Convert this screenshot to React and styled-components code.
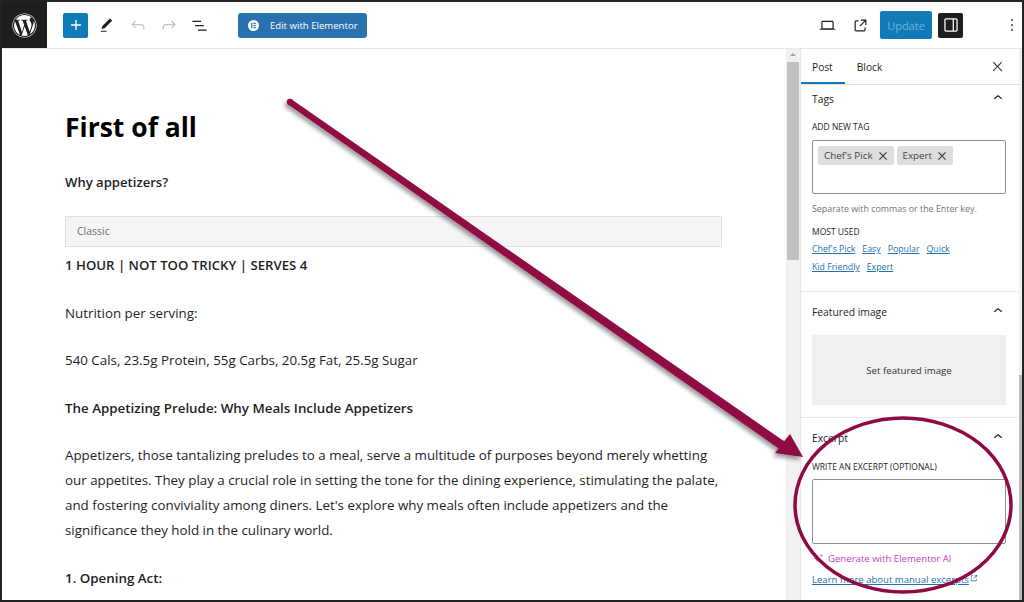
import React from 'react';
import styled, { createGlobalStyle } from 'styled-components';
import { FaWordpress } from 'react-icons/fa';

const GlobalStyle = createGlobalStyle`
  html, body {
    margin: 0;
    padding: 0;
    background: #fff;
  }
  * {
    box-sizing: border-box;
  }
`;

const Icon = ({ d, size = 20, color = '#1e1e1e' }) => (
  <svg width={size} height={size} viewBox="0 0 24 24" fill={color}>
    <path d={d} />
  </svg>
);

const icons = {
  plus: 'M18 11.2h-5.2V6h-1.6v5.2H6v1.6h5.2V18h1.6v-5.2H18z',
  pencil: 'M20.1 5.1L16.9 2 6.2 12.7l-1.3 4.4 4.5-1.3L20.1 5.1zM4 20.8h8v-1.5H4v1.5z',
  undo: 'M18.3 11.7c-.6-.6-1.4-.9-2.3-.9H6.7l2.9-3.3-1.1-1-4.5 5L8.5 16l1-1-2.7-2.7H16c.5 0 .9.2 1.3.5 1 1 1 3.4 1 4.5v.3h1.5v-.2c0-1.5 0-4.3-1.5-5.7z',
  redo: 'M15.6 6.5l-1.1 1 2.9 3.3H8c-.9 0-1.7.3-2.3.9-1.4 1.5-1.4 4.2-1.4 5.6v.2h1.5v-.3c0-1.1 0-3.5 1-4.5.3-.3.7-.5 1.3-.5h9.2L14.5 15l1.1 1.1 4.6-4.6-4.6-5z',
  list: 'M3 6h11v1.5H3V6zm3.5 5.5h11V13h-11v-1.5zM21 17H10v1.5h11V17z',
  desktop: 'M20.5 16h-.7V8c0-1.1-.9-2-2-2H6.2c-1.1 0-2 .9-2 2v8h-.7c-.8 0-1.5.7-1.5 1.5h20c0-.8-.7-1.5-1.5-1.5zM5.7 8c0-.3.2-.5.5-.5h11.6c.3 0 .5.2.5.5v7.6H5.7V8z',
  external: 'M19.5 4.5h-7V6h4.44l-5.97 5.97 1.06 1.06L18 7.06v4.44h1.5v-7Zm-13 1a2 2 0 0 0-2 2v10a2 2 0 0 0 2 2h10a2 2 0 0 0 2-2v-3H17v3a.5.5 0 0 1-.5.5h-10a.5.5 0 0 1-.5-.5v-10a.5.5 0 0 1 .5-.5h3V5.5h-3Z',
  drawer: 'M18 4H6c-1.1 0-2 .9-2 2v12c0 1.1.9 2 2 2h12c1.1 0 2-.9 2-2V6c0-1.1-.9-2-2-2zm-4 14.5H6c-.3 0-.5-.2-.5-.5V6c0-.3.2-.5.5-.5h8v13zm4.5-.5c0 .3-.2.5-.5.5h-2.5v-13H18c.3 0 .5.2.5.5v12z',
  more: 'M13 19h-2v-2h2v2zm0-6h-2v-2h2v2zm0-6h-2V5h2v2z',
  close: 'M13 11.8l6.1-6.3-1-1-6.1 6.2-6.1-6.2-1 1 6.1 6.3-6.5 6.7 1 1 6.5-6.6 6.5 6.6 1-1z',
  chevron: 'M6.5 12.4L12 8l5.5 4.4-.9 1.2L12 10l-4.5 3.6-1-1.2z',
};

function App() {
  return (
    <Frame>
      <GlobalStyle />
      <TopBar>
        <Logo>
          <FaWordpress size={25} color="#fff" />
        </Logo>
        <LeftTools>
          <AddButton>
            <Icon d={icons.plus} color="#fff" size={20} />
          </AddButton>
          <ToolIcon $w={31}>
            <Icon d={icons.pencil} size={17} />
          </ToolIcon>
          <ToolIcon $w={31}>
            <Icon d={icons.undo} color="#c4c4c4" />
          </ToolIcon>
          <ToolIcon $w={31}>
            <Icon d={icons.redo} color="#c4c4c4" />
          </ToolIcon>
          <ToolIcon $w={31}>
            <Icon d={icons.list} size={19} />
          </ToolIcon>
          <ElementorButton>
            <svg width="11" height="11" viewBox="0 0 14 14">
              <circle cx="7" cy="7" r="7" fill="#fff" />
              <rect x="4.2" y="3.6" width="1.4" height="6.8" fill="#2271b1" />
              <rect x="6.8" y="3.6" width="3.2" height="1.4" fill="#2271b1" />
              <rect x="6.8" y="6.3" width="3.2" height="1.4" fill="#2271b1" />
              <rect x="6.8" y="9" width="3.2" height="1.4" fill="#2271b1" />
            </svg>
            Edit with Elementor
          </ElementorButton>
        </LeftTools>
        <RightTools>
          <ToolIcon $w={33}>
            <Icon d={icons.desktop} size={19} />
          </ToolIcon>
          <ToolIcon $w={33}>
            <Icon d={icons.external} size={19} />
          </ToolIcon>
          <UpdateButton>Update</UpdateButton>
          <DrawerButton>
            <Icon d={icons.drawer} color="#fff" />
          </DrawerButton>
          <MoreButton>
            <Icon d={icons.more} />
          </MoreButton>
        </RightTools>
      </TopBar>

      <Body>
        <Canvas>
          <Title>First of all</Title>
          <Lead>Why appetizers?</Lead>
          <ClassicBlock>Classic</ClassicBlock>
          <MetaLine>1 HOUR | NOT TOO TRICKY | SERVES 4</MetaLine>
          <Para>Nutrition per serving:</Para>
          <Para>540 Cals, 23.5g Protein, 55g Carbs, 20.5g Fat, 25.5g Sugar</Para>
          <SubHead>The Appetizing Prelude: Why Meals Include Appetizers</SubHead>
          <Para>
            Appetizers, those tantalizing preludes to a meal, serve a multitude of purposes beyond merely whetting
            our appetites. They play a crucial role in setting the tone for the dining experience, stimulating the palate,
            and fostering conviviality among diners. Let's explore why meals often include appetizers and the
            significance they hold in the culinary world.
          </Para>
          <SubHead>1. Opening Act:</SubHead>
        </Canvas>

        <ScrollTrack>
          <ScrollArrow />
          <ScrollThumb />
        </ScrollTrack>

        <Sidebar>
          <Tabs>
            <Tab $active>Post</Tab>
            <Tab>Block</Tab>
            <TabClose>
              <Icon d={icons.close} size={15} />
            </TabClose>
          </Tabs>

          <Panel $h={207}>
            <PanelHead $scrolled>
              Tags
              <Icon d={icons.chevron} size={18} />
            </PanelHead>
            <TagsLabel>ADD NEW TAG</TagsLabel>
            <TagBox>
              <Tag>
                Chef's Pick
                <Icon d={icons.close} size={12} color="#333" />
              </Tag>
              <Tag>
                Expert
                <Icon d={icons.close} size={12} color="#333" />
              </Tag>
            </TagBox>
            <Hint>Separate with commas or the Enter key.</Hint>
            <SmallLabel>MOST USED</SmallLabel>
            <TagLinks>
              <TagLink>Chef's Pick</TagLink>
              <TagLink>Easy</TagLink>
              <TagLink>Popular</TagLink>
              <TagLink>Quick</TagLink>
            </TagLinks>
            <TagLinks>
              <TagLink>Kid Friendly</TagLink>
              <TagLink>Expert</TagLink>
            </TagLinks>
          </Panel>

          <Panel $h={126}>
            <PanelHead>
              Featured image
              <Icon d={icons.chevron} size={18} />
            </PanelHead>
            <ImageSlot>Set featured image</ImageSlot>
          </Panel>

          <Panel $last>
            <PanelHead>
              Excerpt
              <Icon d={icons.chevron} size={18} />
            </PanelHead>
            <ExcerptLabel>WRITE AN EXCERPT (OPTIONAL)</ExcerptLabel>
            <ExcerptBox />
            <AiLink>
              <svg width="12" height="12" viewBox="0 0 12 12" fill="#c83dbf">
                <path d="M5 2l.9 2.6L8.5 5.5l-2.6.9L5 9l-.9-2.6L1.5 5.5l2.6-.9zM9.5 1l.4 1.1 1.1.4-1.1.4-.4 1.1-.4-1.1L8 2.5l1.1-.4z" />
              </svg>
              Generate with Elementor AI
            </AiLink>
            <LearnLink>
              Learn more about manual excerpts
              <svg width="10" height="10" viewBox="0 0 24 24" fill="#2271b1">
                <path d={icons.external} />
              </svg>
            </LearnLink>
          </Panel>
        </Sidebar>
        <SideScroll>
          <SideThumb />
        </SideScroll>
      </Body>

      <Callout viewBox="0 0 1024 602">
        <defs>
          <filter id="soft" x="-10%" y="-10%" width="120%" height="120%">
            <feDropShadow dx="-2" dy="3" stdDeviation="2" floodColor="#000" floodOpacity="0.4" />
          </filter>
        </defs>
        <g filter="url(#soft)" fill="#8f0a42">
          <circle cx="290" cy="102" r="3.2" />
          <path d="M288.2 104.6L780.4 449.7L785.6 442.3L291.8 99.4Z" />
          <path d="M803 457L775 453L790 434Z" />
        </g>
        <ellipse cx="903" cy="505" rx="108" ry="87" fill="none" stroke="#8f0a42" strokeWidth="3.5" />
      </Callout>
    </Frame>
  );
}

const Frame = styled.div`
  position: relative;
  width: 1024px;
  height: 602px;
  display: flex;
  flex-direction: column;
  overflow: hidden;
  background: #fff;
  border: 2px solid #222;
  font-family: "Open Sans", "Noto Sans", sans-serif;
  color: #1e1e1e;
`;

const TopBar = styled.header`
  flex: none;
  height: 47px;
  display: flex;
  align-items: center;
  border-bottom: 1px solid #e8e8e8;
`;

const Logo = styled.div`
  width: 45px;
  height: 46px;
  background: #1e1e1e;
  display: flex;
  align-items: center;
  justify-content: center;
`;

const LeftTools = styled.div`
  display: flex;
  align-items: center;
  margin-left: 16px;
`;

const RightTools = styled.div`
  display: flex;
  align-items: center;
  margin-left: auto;
`;

const ToolIcon = styled.div`
  width: ${props => props.$w}px;
  height: 24px;
  display: flex;
  align-items: center;
  justify-content: center;
`;

const AddButton = styled.div`
  width: 25px;
  height: 25px;
  margin-right: 3px;
  background: #0f7cb8;
  border-radius: 2px;
  display: flex;
  align-items: center;
  justify-content: center;
`;

const ElementorButton = styled.div`
  width: 129px;
  height: 25px;
  margin-left: 23px;
  background: #2a72af;
  border-radius: 3px;
  color: #fff;
  font-size: 9.6px;
  white-space: nowrap;
  display: flex;
  align-items: center;
  gap: 11px;
  padding-left: 10px;
`;

const UpdateButton = styled.div`
  width: 52px;
  height: 28px;
  margin-left: 3px;
  background: #0f7cb8;
  border-radius: 2px;
  color: #72b0d6;
  font-size: 11px;
  display: flex;
  align-items: center;
  justify-content: center;
`;

const DrawerButton = styled.div`
  width: 25px;
  height: 25px;
  margin-left: 6px;
  background: #1e1e1e;
  border-radius: 2px;
  display: flex;
  align-items: center;
  justify-content: center;
`;

const MoreButton = styled.div`
  width: 20px;
  height: 20px;
  margin-left: 39px;
`;

const Body = styled.div`
  flex: 1;
  min-height: 0;
  display: flex;
`;

const Canvas = styled.main`
  width: 784px;
  flex: none;
  padding: 61px 64px 0 63px;
  overflow: hidden;
  font-size: 13.35px;
  line-height: 25px;
  color: #1e1e1e;
`;

const Title = styled.h1`
  margin: 0;
  font-size: 26.5px;
  line-height: 34px;
  font-weight: 700;
  color: #000;
`;

const Lead = styled.p`
  margin: 26px 0 0;
  font-size: 13.1px;
  font-weight: 600;
`;

const ClassicBlock = styled.div`
  height: 31px;
  margin-top: 21px;
  background: #f5f5f5;
  border: 1px solid #e0e0e0;
  padding-left: 11px;
  display: flex;
  align-items: center;
  font-size: 10.5px;
  color: #6d6d6d;
`;

const MetaLine = styled.p`
  margin: 6px 0 0;
  font-size: 13.2px;
  font-weight: 600;
`;

const Para = styled.p`
  margin: 22.5px 0 0;
`;

const SubHead = styled.p`
  margin: 22.5px 0 0;
  font-size: 13.35px;
  font-weight: 600;
`;

const ScrollTrack = styled.div`
  width: 14px;
  flex: none;
  background: #f1f1f1;
  padding-top: 4px;
`;

const ScrollArrow = styled.div`
  width: 0;
  height: 0;
  margin: 0 auto 6px;
  border-left: 3px solid transparent;
  border-right: 3px solid transparent;
  border-bottom: 3px solid #a3a3a3;
`;

const ScrollThumb = styled.div`
  height: 198px;
  background: #c1c1c1;
  margin: 0 1px;
`;

const Sidebar = styled.aside`
  width: 219px;
  flex: none;
  border-left: 1px solid #e8e8e8;
  overflow: hidden;
`;

const Tabs = styled.div`
  height: 36px;
  display: flex;
  align-items: center;
  border-bottom: 1px solid #e0e0e0;
  font-size: 10.2px;
`;

const Tab = styled.div`
  height: 100%;
  padding: 0 12px 0 11px;
  display: flex;
  align-items: center;
  color: #1e1e1e;
  box-shadow: ${props => (props.$active ? 'inset 0 -2px 0 #0f7cb8' : 'none')};
  margin-right: ${props => (props.$active ? '1px' : '0')};
`;

const TabClose = styled.div`
  margin-left: auto;
  margin-right: 14px;
  height: 15px;
`;

const Panel = styled.section`
  ${props => (props.$h ? `height: ${props.$h}px;` : '')}
  padding: 0 13px 0 11px;
  border-bottom: ${props => (props.$last ? 'none' : '1px solid #e8e8e8')};
`;

const PanelHead = styled.div`
  height: ${props => (props.$scrolled ? '28px' : '40px')};
  display: flex;
  align-items: center;
  justify-content: space-between;
  font-size: 10.3px;
  font-weight: 500;

  svg {
    margin-right: -1px;
    margin-top: -3px;
  }
`;

const SmallLabel = styled.div`
  font-size: 8.5px;
  line-height: 12px;
  font-weight: 500;
  color: #1e1e1e;
`;

const TagsLabel = styled(SmallLabel)`
  margin-top: 8px;
`;

const ExcerptLabel = styled(SmallLabel)`
  margin-top: 3px;
`;

const TagBox = styled.div`
  height: 54px;
  margin-top: 7px;
  border: 1px solid #8c8f94;
  border-radius: 2px;
  padding: 5px;
  display: flex;
  align-items: flex-start;
  gap: 3px;
`;

const Tag = styled.div`
  height: 19px;
  padding: 0 5px 0 6px;
  background: #ddd;
  border-radius: 2px;
  display: flex;
  align-items: center;
  gap: 4px;
  font-size: 9.8px;
  color: #444;

  svg {
    stroke: #333;
    stroke-width: 0.8;
  }
`;

const Hint = styled.div`
  margin: 9px 0 11px;
  font-size: 8.9px;
  line-height: 12px;
  color: #757575;
`;

const TagLinks = styled.div`
  margin-top: 5px;
  display: flex;
  gap: 7px;
`;

const TagLink = styled.a`
  font-size: 8.75px;
  line-height: 13px;
  color: #2271b1;
  text-decoration: underline;
`;

const ImageSlot = styled.div`
  height: 70px;
  margin-top: 3px;
  background: #f0f0f0;
  display: flex;
  align-items: center;
  justify-content: center;
  font-size: 9.7px;
  color: #333;
`;

const ExcerptBox = styled.div`
  height: 65px;
  margin-top: 6px;
  border: 1px solid #8c8f94;
  border-radius: 2px;
`;

const AiLink = styled.div`
  margin-top: 8px;
  display: flex;
  align-items: center;
  gap: 4px;
  font-size: 9.6px;
  line-height: 14px;
  color: #c83dbf;
`;

const LearnLink = styled.a`
  display: block;
  margin-top: 7px;
  font-size: 9.55px;
  line-height: 13px;
  color: #2271b1;
  text-decoration: underline;
  white-space: nowrap;
`;

const SideScroll = styled.div`
  width: 3px;
  flex: none;
  padding-top: 326px;
  background: #f0f0f0;
`;

const SideThumb = styled.div`
  height: 100%;
  background: #bdbdbd;
`;

const Callout = styled.svg`
  position: absolute;
  left: -2px;
  top: -2px;
  width: 1024px;
  height: 602px;
  pointer-events: none;
`;

export default App;
